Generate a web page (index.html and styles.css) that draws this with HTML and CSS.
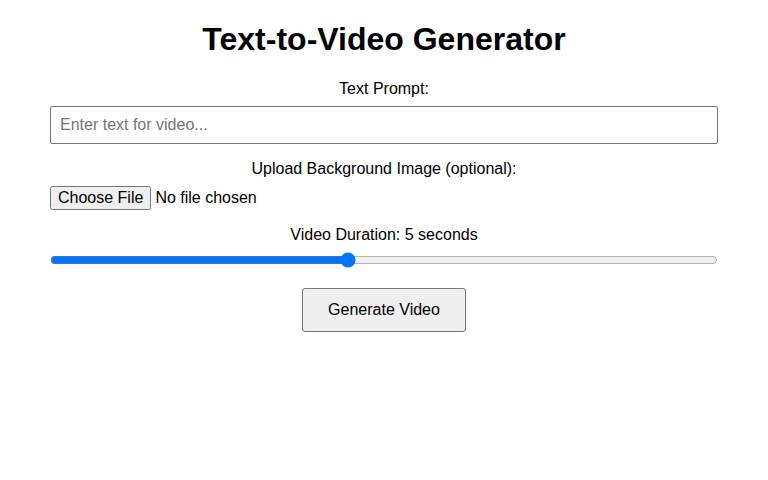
FILE: index.html
```html
<!DOCTYPE html>
<html lang="en">
<head>
    <meta charset="UTF-8">
    <meta name="viewport" content="width=device-width, initial-scale=1.0">
    <title>Text-to-Video Generator</title>
    <link rel="stylesheet" href="styles.css">
</head>
<body>
    <h1 class="title">Text-to-Video Generator</h1>
    <div class="container">
        <div class="form-group">
            <label for="prompt">Text Prompt:</label>
            <input type="text" id="prompt" class="text-input" placeholder="Enter text for video...">
        </div>
        <div class="form-group">
            <label for="bg">Upload Background Image (optional):</label>
            <input type="file" id="bg" class="file-input" accept="image/*">
        </div>
        <div class="form-group">
            <label for="duration">Video Duration: <span id="durationValue">5</span> seconds</label>
            <input type="range" id="duration" class="range-input" min="1" max="10" value="5">
        </div>
        <div class="actions">
            <button class="generate-button">Generate Video</button>
        </div>
    </div>
</body>
</html>
```

FILE: styles.css
```css
body {
    margin: 0;
    padding: 0 8px;
    font-family: "Liberation Sans", Arial, sans-serif;
    color: #000;
    background: #fff;
}

.title {
    text-align: center;
    font-size: 32px;
    margin: 21px 0 22px;
}

.container {
    max-width: 668px;
    margin: 0 auto;
    text-align: center;
}

.form-group {
    margin-bottom: 16px;
}

.form-group label {
    display: block;
    font-size: 16px;
    line-height: 18px;
    margin-bottom: 8px;
}

.text-input {
    display: block;
    width: 100%;
    box-sizing: border-box;
    padding: 9px;
    font-family: inherit;
    font-size: 16px;
    line-height: 18px;
    height: 38px;
    border: 1px solid #767676;
    border-radius: 2px;
}

.file-input {
    display: block;
    font-family: inherit;
    font-size: 16px;
}

.range-input {
    display: block;
    width: 100%;
    margin: 0;
    height: 16px;
    accent-color: #0075ff;
}

.actions {
    margin-top: 20px;
}

.generate-button {
    font-family: inherit;
    font-size: 16px;
    padding: 12px 25px;
    background: #efefef;
    border: 1px solid #767676;
    border-radius: 3px;
    color: #000;
    cursor: pointer;
}
```
